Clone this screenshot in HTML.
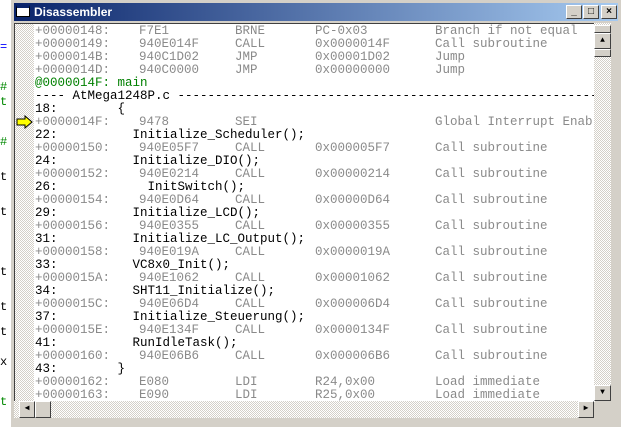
<!DOCTYPE html><html><head><style>
body{margin:0;width:621px;height:427px;overflow:hidden;background:#fff;font-family:"Liberation Mono",monospace;position:relative}
.bg{position:absolute;left:0;top:0;width:10px;height:427px;background:#fff;font-size:12px;overflow:hidden}
.bg span{position:absolute;left:0}
.win{position:absolute;left:10px;top:0;width:611px;height:427px;background:#d4d0c8;border-left:1px solid #fff;box-sizing:border-box}
.title{position:absolute;left:3px;top:3px;width:604px;height:18px;background:linear-gradient(90deg,#0a246a,#a6caf0);color:#fff;font:bold 12px "Liberation Sans",sans-serif;line-height:18px}
.title .ic{position:absolute;left:2px;top:2px;width:14px;height:12px;background:#fff;border:1px solid #000;box-sizing:border-box;border-top:3px solid #0a246a}
.title .t{position:absolute;left:20px;top:0}
.btn{position:absolute;top:2px;width:16px;height:14px;background:#d4d0c8;border:1px solid;border-color:#fff #404040 #404040 #fff;box-sizing:border-box;color:#000;font:bold 10px "Liberation Sans";text-align:center;line-height:12px}
.content{position:absolute;left:3px;top:23px;width:580px;height:378px;background:#fff;overflow:hidden;border-top:1px solid #404040;border-left:1px solid #404040}
.gut{position:absolute;left:0;top:0;width:19px;height:378px;background:repeating-conic-gradient(#d4d0c8 0 25%,#fff 0 50%) 0 0/2px 2px}
.l{position:absolute;height:13px;font-size:12.5px;line-height:13px;white-space:pre}
.g{color:#8a8a8a}.gr{color:#008000}.k{color:#000}
.vs{position:absolute;left:583px;top:23px;width:17px;height:378px;background:repeating-conic-gradient(#d4d0c8 0 25%,#fff 0 50%) 0 0/2px 2px}
.b3{position:absolute;background:#d4d0c8;border:1px solid;border-color:#fff #404040 #404040 #fff;box-sizing:border-box;font-size:8px;text-align:center;color:#000;line-height:14px}
.hs{position:absolute;left:3px;top:401px;width:580px;height:17px;background:repeating-conic-gradient(#d4d0c8 0 25%,#fff 0 50%) 0 0/2px 2px}
</style></head><body>
<div class="bg"><span style="top:40px;color:#00f">=</span><span style="top:80px;color:#080">#</span><span style="top:95px;color:#080">t</span><span style="top:135px;color:#080">#</span><span style="top:170px">t</span><span style="top:205px">t</span><span style="top:265px">t</span><span style="top:300px">t</span><span style="top:325px">t</span><span style="top:355px">x</span><span style="top:395px;color:#080">t</span></div>
<div class="win">
<div class="title"><div class="ic"></div><span class="t">Disassembler</span>
<div class="btn" style="left:552px">_</div><div class="btn" style="left:569px">□</div><div class="btn" style="left:587px">×</div></div>
<div class="content"><div class="gut"></div>
<svg style="position:absolute;left:1px;top:91px" width="18" height="14"><path d="M1 4h8V1l7 6-7 6V10H1z" fill="#ff0" stroke="#000"/></svg>
<div id="t"></div>
</div>
<div class="vs">
<div class="b3" style="left:0;top:2px;width:17px;height:8px"></div>
<div class="b3" style="left:0;top:10px;width:17px;height:16px">▲</div>
<div class="b3" style="left:0;top:26px;width:17px;height:8px"></div>
<div class="b3" style="left:0;top:362px;width:17px;height:16px">▼</div>
</div>
<div class="hs">
<div class="b3" style="left:5px;top:0;width:16px;height:17px">◀</div>
<div class="b3" style="left:21px;top:0;width:16px;height:17px"></div>
<div class="b3" style="left:564px;top:0;width:16px;height:17px">▶</div>
</div>
</div>
<script>
var L=[
['g','+00000148:','F7E1','BRNE','PC-0x03','Branch if not equal'],
['g','+00000149:','940E014F','CALL','0x0000014F','Call subroutine'],
['g','+0000014B:','940C1D02','JMP','0x00001D02','Jump'],
['g','+0000014D:','940C0000','JMP','0x00000000','Jump'],
['gr','@0000014F: main'],
['k','---- AtMega1248P.c ----------------------------------------------------------------'],
['k','18:        {'],
['g','+0000014F:','9478','SEI','','Global Interrupt Enable'],
['k','22:          Initialize_Scheduler();'],
['g','+00000150:','940E05F7','CALL','0x000005F7','Call subroutine'],
['k','24:          Initialize_DIO();'],
['g','+00000152:','940E0214','CALL','0x00000214','Call subroutine'],
['k','26:            InitSwitch();'],
['g','+00000154:','940E0D64','CALL','0x00000D64','Call subroutine'],
['k','29:          Initialize_LCD();'],
['g','+00000156:','940E0355','CALL','0x00000355','Call subroutine'],
['k','31:          Initialize_LC_Output();'],
['g','+00000158:','940E019A','CALL','0x0000019A','Call subroutine'],
['k','33:          VC8x0_Init();'],
['g','+0000015A:','940E1062','CALL','0x00001062','Call subroutine'],
['k','34:          SHT11_Initialize();'],
['g','+0000015C:','940E06D4','CALL','0x000006D4','Call subroutine'],
['k','37:          Initialize_Steuerung();'],
['g','+0000015E:','940E134F','CALL','0x0000134F','Call subroutine'],
['k','41:          RunIdleTask();'],
['g','+00000160:','940E06B6','CALL','0x000006B6','Call subroutine'],
['k','43:        }'],
['g','+00000162:','E080','LDI','R24,0x00','Load immediate'],
['g','+00000163:','E090','LDI','R25,0x00','Load immediate'],
['g','+00000164:','9508','RET','','Subroutine return']];
var h='',xs=[20,124,220,300,420];
L.forEach(function(r,i){var y=1+i*13;for(var j=1;j<r.length;j++){h+='<div class="l '+r[0]+'" style="top:'+y+'px;left:'+xs[j-1]+'px">'+r[j]+'</div>';}});
document.getElementById('t').innerHTML=h;
</script>
</body></html>
